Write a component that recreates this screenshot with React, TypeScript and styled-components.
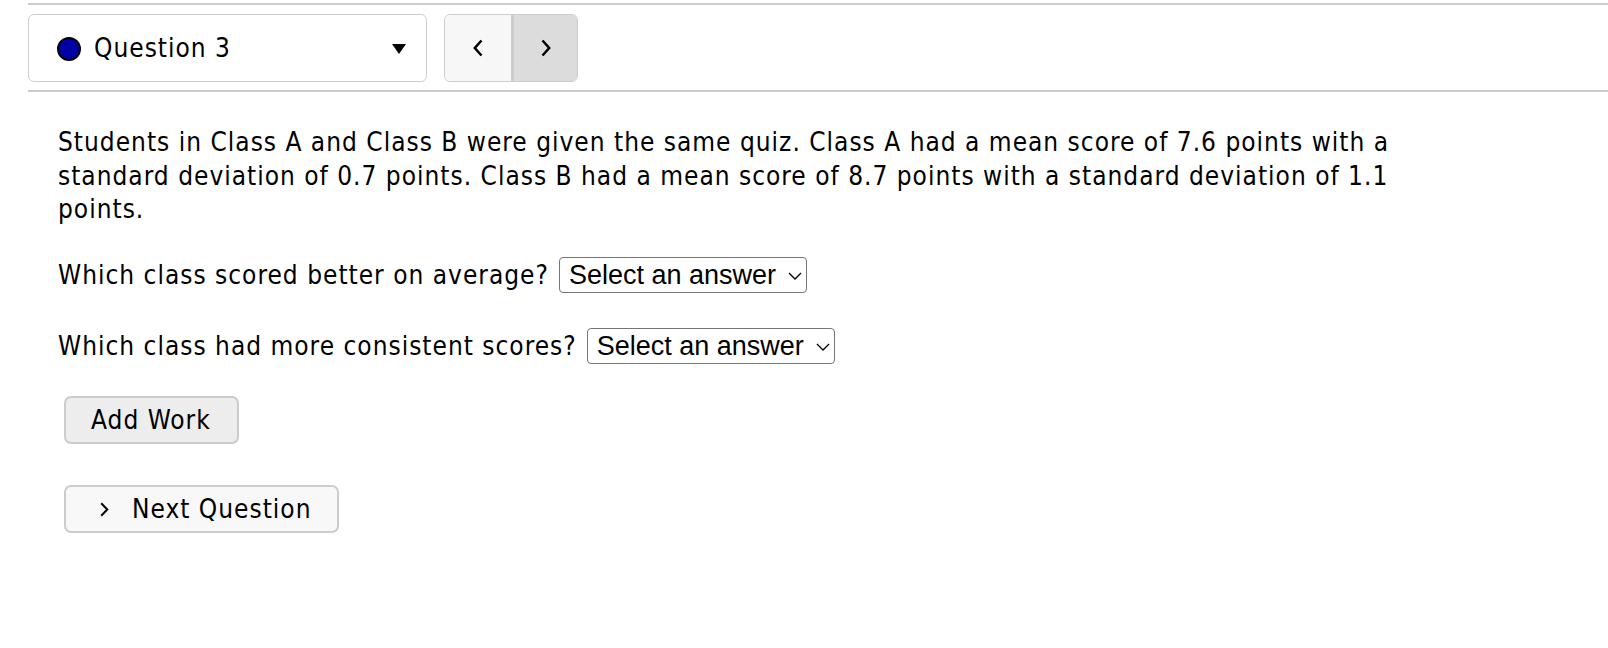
import React from "react";
import styled, { createGlobalStyle } from "styled-components";

const Global = createGlobalStyle`
  html, body { margin: 0; padding: 0; background: #fff; }
  body {
    font-family: "DejaVu Sans Condensed", "DejaVu Sans", sans-serif;
    font-stretch: condensed;
    letter-spacing: 1px;
    color: #000;
  }
`;

const Page = styled.div`
  padding: 3px 0 40px 28px;
`;

const Toolbar = styled.div`
  display: flex;
  align-items: center;
  gap: 17px;
  border-top: 2px solid #cccccc;
  border-bottom: 2px solid #cccccc;
  padding: 8.5px 0 8px;
`;

const QuestionPicker = styled.div`
  box-sizing: border-box;
  width: 399px;
  height: 68px;
  display: flex;
  align-items: center;
  padding: 0 20px 0 28px;
  border: 1.5px solid #cccccc;
  border-radius: 6px;
  background: #fff;
  font-size: 26px;
`;

const StatusDot = styled.span`
  box-sizing: border-box;
  width: 24px;
  height: 24px;
  border-radius: 50%;
  background: #0000a8;
  border: 2.5px solid #000;
  flex: none;
  margin-top: 2px;
`;

const PickerLabel = styled.span`
  margin-left: 13px;
  flex: 1;
`;

const Caret = styled.svg`
  width: 14px;
  height: 10px;
  flex: none;
  margin-top: 2px;
`;

const NavGroup = styled.div`
  box-sizing: border-box;
  height: 68px;
  display: flex;
  border: 1.5px solid #cccccc;
  border-radius: 6px;
  overflow: hidden;
`;

const NavButton = styled.button<{ $active?: boolean }>`
  width: 66px;
  height: 100%;
  display: flex;
  align-items: center;
  justify-content: center;
  border: none;
  padding: 0;
  background: ${(p) => (p.$active ? "#dcdcdc" : "#f7f7f7")};
  & + & {
    border-left: 3px solid #cccccc;
  }
`;

const Content = styled.div`
  padding-left: 30px;
`;

const Prompt = styled.p`
  margin: 34.5px 0 0;
  max-width: 1400px;
  font-size: 26px;
  line-height: 33.5px;
`;

const QuestionRow = styled.div<{ $top: number }>`
  display: flex;
  align-items: center;
  gap: 10px;
  height: 36px;
  margin-top: ${(p) => p.$top}px;
  font-size: 26px;
`;

const SelectWrap = styled.span`
  position: relative;
  display: inline-flex;
`;

const AnswerSelect = styled.select`
  appearance: none;
  -webkit-appearance: none;
  box-sizing: border-box;
  height: 36px;
  width: 248px;
  padding: 0 30px 0 9px;
  font-family: "Liberation Sans", Arial, sans-serif;
  font-size: 27px;
  letter-spacing: 0;
  color: #000;
  background: #fff;
  border: 1.5px solid #767676;
  border-radius: 4px;
`;

const SelectChevron = styled.svg`
  position: absolute;
  right: 5px;
  top: 50%;
  width: 14px;
  height: 8px;
  margin-top: -3px;
  pointer-events: none;
`;

const ActionButton = styled.button<{ $top: number; $bg: string; $pl: number; $pr: number }>`
  box-sizing: border-box;
  display: flex;
  align-items: center;
  height: 48px;
  margin: ${(p) => p.$top}px 0 0 6px;
  padding: 0 ${(p) => p.$pr}px 0 ${(p) => p.$pl}px;
  background: ${(p) => p.$bg};
  border: 2px solid #cccccc;
  border-radius: 7px;
  font-family: "DejaVu Sans Condensed", "DejaVu Sans", sans-serif;
  font-stretch: condensed;
  letter-spacing: 1px;
  font-size: 26px;
  color: #000;
`;

const ButtonChevron = styled.svg`
  width: 9px;
  height: 15px;
  margin-right: 23px;
`;

const Chevron = ({ dir }: { dir: "left" | "right" }) => (
  <svg width="10" height="18" viewBox="0 0 10 18" fill="none">
    <path
      d={dir === "left" ? "M8.5 1.5 L1.8 9 L8.5 16.5" : "M1.5 1.5 L8.2 9 L1.5 16.5"}
      stroke="#000"
      strokeWidth="2.5"
      strokeLinejoin="miter"
    />
  </svg>
);

const Answer = () => (
  <SelectWrap>
    <AnswerSelect defaultValue="">
      <option value="">Select an answer</option>
      <option value="a">Class A</option>
      <option value="b">Class B</option>
    </AnswerSelect>
    <SelectChevron viewBox="0 0 14 8" fill="none">
      <path d="M1 1 L7 7 L13 1" stroke="#000" strokeWidth="1.3" />
    </SelectChevron>
  </SelectWrap>
);

export default function App() {
  return (
    <>
      <Global />
      <Page>
        <Toolbar>
          <QuestionPicker>
            <StatusDot />
            <PickerLabel>Question 3</PickerLabel>
            <Caret viewBox="0 0 14 10">
              <path d="M0 0 H14 L7 10 Z" fill="#000" />
            </Caret>
          </QuestionPicker>
          <NavGroup>
            <NavButton aria-label="Previous">
              <Chevron dir="left" />
            </NavButton>
            <NavButton $active aria-label="Next">
              <Chevron dir="right" />
            </NavButton>
          </NavGroup>
        </Toolbar>
        <Content>
          <Prompt>
            Students in Class A and Class B were given the same quiz. Class A had a mean score of 7.6 points with a
            standard deviation of 0.7 points. Class B had a mean score of 8.7 points with a standard deviation of 1.1
            points.
          </Prompt>
          <QuestionRow $top={30.75}>
            <span>Which class scored better on average?</span>
            <Answer />
          </QuestionRow>
          <QuestionRow $top={35}>
            <span>Which class had more consistent scores?</span>
            <Answer />
          </QuestionRow>
          <ActionButton $top={32} $bg="#ededed" $pl={25} $pr={26}>
            Add Work
          </ActionButton>
          <ActionButton $top={41} $bg="#f8f8f8" $pl={34} $pr={25}>
            <ButtonChevron viewBox="0 0 9 15" fill="none">
              <path d="M1.2 1.2 L7.3 7.5 L1.2 13.8" stroke="#000" strokeWidth="2" />
            </ButtonChevron>
            Next Question
          </ActionButton>
        </Content>
      </Page>
    </>
  );
}
